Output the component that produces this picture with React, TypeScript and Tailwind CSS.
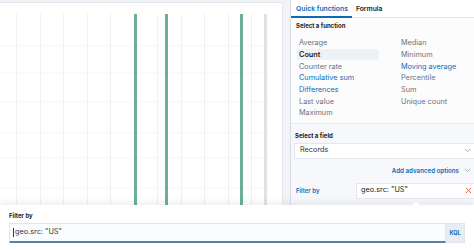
import React from 'react';

const gridX = [16, 40, 63, 87, 110, 157, 181, 204, 228, 251];
const greenX = [135.5, 166.5, 241.5];

const leftFns = [
  { label: 'Average' },
  { label: 'Count', active: true },
  { label: 'Counter rate' },
  { label: 'Cumulative sum', link: true },
  { label: 'Differences', link: true },
  { label: 'Last value' },
  { label: 'Maximum' },
];

const rightFns = [
  { label: 'Median' },
  { label: 'Minimum' },
  { label: 'Moving average', link: true },
  { label: 'Percentile' },
  { label: 'Sum' },
  { label: 'Unique count' },
];

function FnItem({ item }: { item: { label: string; active?: boolean; link?: boolean } }) {
  return (
    <div
      className={
        'h-[11.7px] flex items-center px-[2px] rounded-[2px] text-[7.3px] leading-none whitespace-nowrap ' +
        (item.active
          ? 'bg-[#eef1f5] font-semibold text-[#1a1c21]'
          : item.link
            ? 'text-[#0f6bb5]'
            : 'text-[#6a717d]')
      }
    >
      {item.label}
    </div>
  );
}

function Chevron({ className }: { className?: string }) {
  return (
    <svg width="7" height="5" viewBox="0 0 7 5" className={className} fill="none">
      <path d="M0.8 1l2.7 2.6L6.2 1" stroke="currentColor" strokeWidth="0.9" />
    </svg>
  );
}

function Chart() {
  return (
    <div className="w-[283px] h-full pt-[2px] bg-[#f1f3f6]">
      <div className="w-full h-full bg-white border-t border-r border-[#e4e8ee]">
        <svg width="282" height="250" className="block">
          {[43, 70, 99, 130, 155, 185].map((y) => (
            <line key={y} x1="0" x2="270" y1={y} y2={y} stroke="#f6f7f9" strokeWidth="1" />
          ))}
          {gridX.map((x) => (
            <line key={x} x1={x + 0.5} x2={x + 0.5} y1="11" y2="250" stroke="#eef0f3" strokeWidth="1" />
          ))}
          {greenX.map((x) => (
            <rect key={x} x={x - 1.5} y="11" width="3" height="240" fill="#6cae98" />
          ))}
          <rect x="264" y="11" width="3" height="240" fill="#dfe2e7" />
        </svg>
      </div>
    </div>
  );
}

function Panel() {
  return (
    <div className="flex-1 h-full flex flex-col border-l border-[#d8dde6] bg-[#f7f8fb]">
      <div className="h-[18px] bg-white border-b border-[#e0e5ec] flex items-end text-[6.8px] leading-none">
        <div className="pl-[5px] pr-[4px] pb-[3px] border-b-2 border-[#0f6bb5] -mb-[1px] text-[#0f6bb5] font-semibold">
          Quick functions
        </div>
        <div className="px-[4px] pb-[4px] text-[#1a1c21] font-semibold">Formula</div>
      </div>

      <div className="bg-[#fcfcfd] border-b border-[#e6e9ef] pl-[5px] pr-[4px] pt-[5px] pb-[4px]">
        <div className="text-[6px] font-bold text-[#1a1c21] leading-none mb-[8px]">Select a function</div>
        <div className="grid grid-cols-[82px_1fr] gap-x-[20px] pl-[1px]">
          <div className="flex flex-col">
            {leftFns.map((f) => (
              <FnItem key={f.label} item={f} />
            ))}
          </div>
          <div className="flex flex-col">
            {rightFns.map((f) => (
              <FnItem key={f.label} item={f} />
            ))}
          </div>
        </div>
      </div>

      <div className="pl-[3px] pt-[9px]">
        <div className="pl-[1px] text-[6px] font-bold text-[#1a1c21] leading-none mb-[4px]">Select a field</div>
        <div className="h-[16px] bg-white border border-[#e4e8ee] border-r-0 flex items-center pl-[5px] pr-[3px] text-[7.3px] text-[#343741]">
          <span className="flex-1">Records</span>
          <Chevron className="text-[#98a2b3]" />
        </div>
        <div className="h-[24px] flex items-center justify-end pr-[3px] gap-[5px] text-[6.2px] font-semibold text-[#0f6bb5]">
          <span>Add advanced options</span>
          <Chevron className="text-[#98a2b3]" />
        </div>
        <div className="flex items-center pl-[2px]">
          <span className="w-[60px] text-[6px] font-semibold text-[#0f6bb5]">Filter by</span>
          <div className="flex-1 h-[16px] bg-white border border-[#e4e8ee] border-r-0 flex items-center pl-[4px] pr-[2px] text-[7.3px] text-[#1a1c21]">
            <span className="flex-1">geo.src: "US"</span>
            <svg width="7" height="7" viewBox="0 0 7 7">
              <path d="M1 1l5 5M6 1L1 6" stroke="#e7664c" strokeWidth="1" />
            </svg>
          </div>
        </div>
      </div>
    </div>
  );
}

function FilterPopover() {
  return (
    <div className="absolute left-0 right-0 top-[205px] bottom-0 bg-white shadow-[0_-2px_8px_rgba(0,0,0,0.08)] px-[9px] pt-[8px]">
      <div className="absolute -top-[4px] left-[412px] w-[8px] h-[8px] bg-white rotate-45 border-l border-t border-[#e6e9ef]" />
      <div className="text-[6px] font-bold text-[#1a1c21] leading-none mb-[4px]">Filter by</div>
      <div className="flex h-[20px] w-[456px]">
        <div className="flex-1 bg-[#fbfcfd] border border-[#e1e5ec] border-b-2 border-b-[#5c80ad] flex items-center pl-[3px] text-[7.3px] text-[#343741]">
          <span className="w-[1px] h-[9px] bg-[#343741] mr-[1px]" />
          geo.src: "US"
        </div>
        <div className="w-[19px] bg-[#e9edf3] border border-l-0 border-[#e1e5ec] flex items-center justify-center text-[5.5px] font-bold text-[#0f6bb5]">
          KQL
        </div>
      </div>
    </div>
  );
}

export default function App() {
  return (
    <div
      className="relative w-[474px] h-[250px] overflow-hidden bg-white flex"
      style={{ fontFamily: 'Inter, "Noto Sans", sans-serif' }}
    >
      <Chart />
      <div className="w-[7px] h-full bg-[#f1f3f6]" />
      <Panel />
      <FilterPopover />
    </div>
  );
}
